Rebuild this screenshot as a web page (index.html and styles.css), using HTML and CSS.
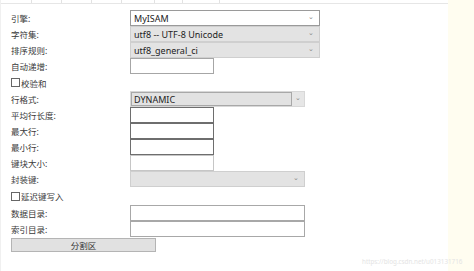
FILE: index.html
```html
<!DOCTYPE html>
<html>
<head>
<meta charset="utf-8">
<link rel="stylesheet" href="styles.css">
</head>
<body>
<div class="page">
  <div class="panel">
    <div class="tabs">
      <span class="tab t1"></span><span class="tab t2"></span><span class="tab t3"></span><span class="tab t4"></span><span class="tab active"></span><span class="tab t6"></span><span class="tab t7"></span><span class="tab rest"></span>
    </div>
    <div class="form">
      <div class="row"><span class="label">引擎:</span><div class="select white"><span class="val">MyISAM</span><span class="chev">&#8964;</span></div></div>
      <div class="row"><span class="label">字符集:</span><div class="select grey"><span class="val">utf8 -- UTF-8 Unicode</span><span class="chev">&#8964;</span></div></div>
      <div class="row"><span class="label">排序规则:</span><div class="select grey"><span class="val">utf8_general_ci</span><span class="chev">&#8964;</span></div></div>
      <div class="row"><span class="label">自动递增:</span><div class="input short light"></div></div>
      <div class="row check"><span class="box"></span><span class="clabel">校验和</span></div>
      <div class="row"><span class="label">行格式:</span><div class="combo"><div class="cval">DYNAMIC</div><div class="cbtn"><span class="chev">&#8964;</span></div></div></div>
      <div class="row"><span class="label">平均行长度:</span><div class="input short dark first"></div></div>
      <div class="row"><span class="label">最大行:</span><div class="input short dark"></div></div>
      <div class="row"><span class="label">最小行:</span><div class="input short dark"></div></div>
      <div class="row"><span class="label">键块大小:</span><div class="input short pale"></div></div>
      <div class="row"><span class="label">封装键:</span><div class="select grey mid"><span class="val"></span><span class="chev">&#8964;</span></div></div>
      <div class="row check tall"><span class="box"></span><span class="clabel">延迟键写入</span></div>
      <div class="row"><span class="label">数据目录:</span><div class="input wide"></div></div>
      <div class="row"><span class="label">索引目录:</span><div class="input wide"></div></div>
      <div class="btnrow"><button class="btn">分割区</button></div>
    </div>
  </div>
  <div class="strip"></div>
  <div class="watermark">https://blog.csdn.net/u013131716</div>
</div>
</body>
</html>
```
FILE: styles.css
```css
html, body { margin: 0; padding: 0; }
body { width: 474px; height: 271px; overflow: hidden; background: #fff; font-family: "Noto Sans", "Noto Sans CJK SC", sans-serif; color: #333; }
.page { position: relative; display: flex; width: 474px; height: 271px; }
.panel { width: 448px; display: flex; flex-direction: column; border-left: 1px solid #f0f0f0; box-sizing: border-box; }
.strip { width: 26px; background: #fffdf0; }
.tabs { display: flex; height: 3px; border-bottom: 1px solid #e6e6e6; margin-bottom: 6px; }
.tab { height: 3px; border-right: 1px solid #e2e2e2; box-sizing: border-box; }
.t1 { width: 31px; } .t2 { width: 30px; } .t3 { width: 30px; } .t4 { width: 30px; }
.active { width: 33px; border-right: 1px solid #e2e2e2; background: #fff; }
.t6 { width: 28px; } .t7 { width: 37px; }
.rest { flex: 1; border-right: none; }
.form { display: flex; flex-direction: column; }
.row { display: flex; align-items: center; height: 16px; }
.label { width: 119px; padding-left: 10px; font-size: 8.5px; font-family: "Noto Sans CJK SC", sans-serif; color: #3a3a3a; }
.select { box-sizing: border-box; width: 190px; height: 16px; display: flex; align-items: center; justify-content: space-between; padding: 0 5px 0 3px; font-size: 9px; color: #222; }
.select.white { background: #fff; border: 1px solid #9a9a9a; }
.select.grey { background: #e3e3e3; border: 1px solid #cfcfcf; }
.select.mid { width: 175px; }
.chev { font-size: 7px; color: #888; line-height: 1; transform: translateY(-2px); }
.input { box-sizing: border-box; height: 16px; background: #fff; }
.short { width: 84px; }
.light { border: 1px solid #a6a6a6; }
.dark { border: 1px solid #6e6e6e; }
.pale { border: 1px solid #c6c6c6; }
.wide { width: 175px; border: 1px solid #a8a8a8; }
.check { height: 17px; padding-left: 10px; }
.check.tall { height: 18px; }
.box { box-sizing: border-box; width: 9px; height: 9px; border: 1px solid #666; background: #fff; margin-right: 1px; }
.clabel { font-size: 8.5px; font-family: "Noto Sans CJK SC", sans-serif; color: #3a3a3a; }
.combo { display: flex; height: 16px; width: 175px; background: #e6e6e6; box-sizing: border-box; border: 1px solid #d8d8d8; }
.cval { flex: 1; box-sizing: border-box; border: 1px solid #a8a8a8; background: #e2e2e2; font-size: 9px; color: #222; padding-left: 2px; display: flex; align-items: center; }
.cbtn { width: 12px; display: flex; align-items: center; justify-content: center; }
.btnrow { padding-left: 10px; margin-top: 1px; }
.btn { box-sizing: border-box; width: 145px; height: 14px; background: #e1e1e1; border: 1px solid #b4b4b4; padding: 0; font-family: "Noto Sans CJK SC", sans-serif; font-size: 8.5px; color: #333; line-height: 12px; display: block; }
.watermark { position: absolute; left: 362px; top: 257px; font-size: 6.3px; color: #e4e4e4; font-family: "Noto Sans", sans-serif; white-space: nowrap; }
```
